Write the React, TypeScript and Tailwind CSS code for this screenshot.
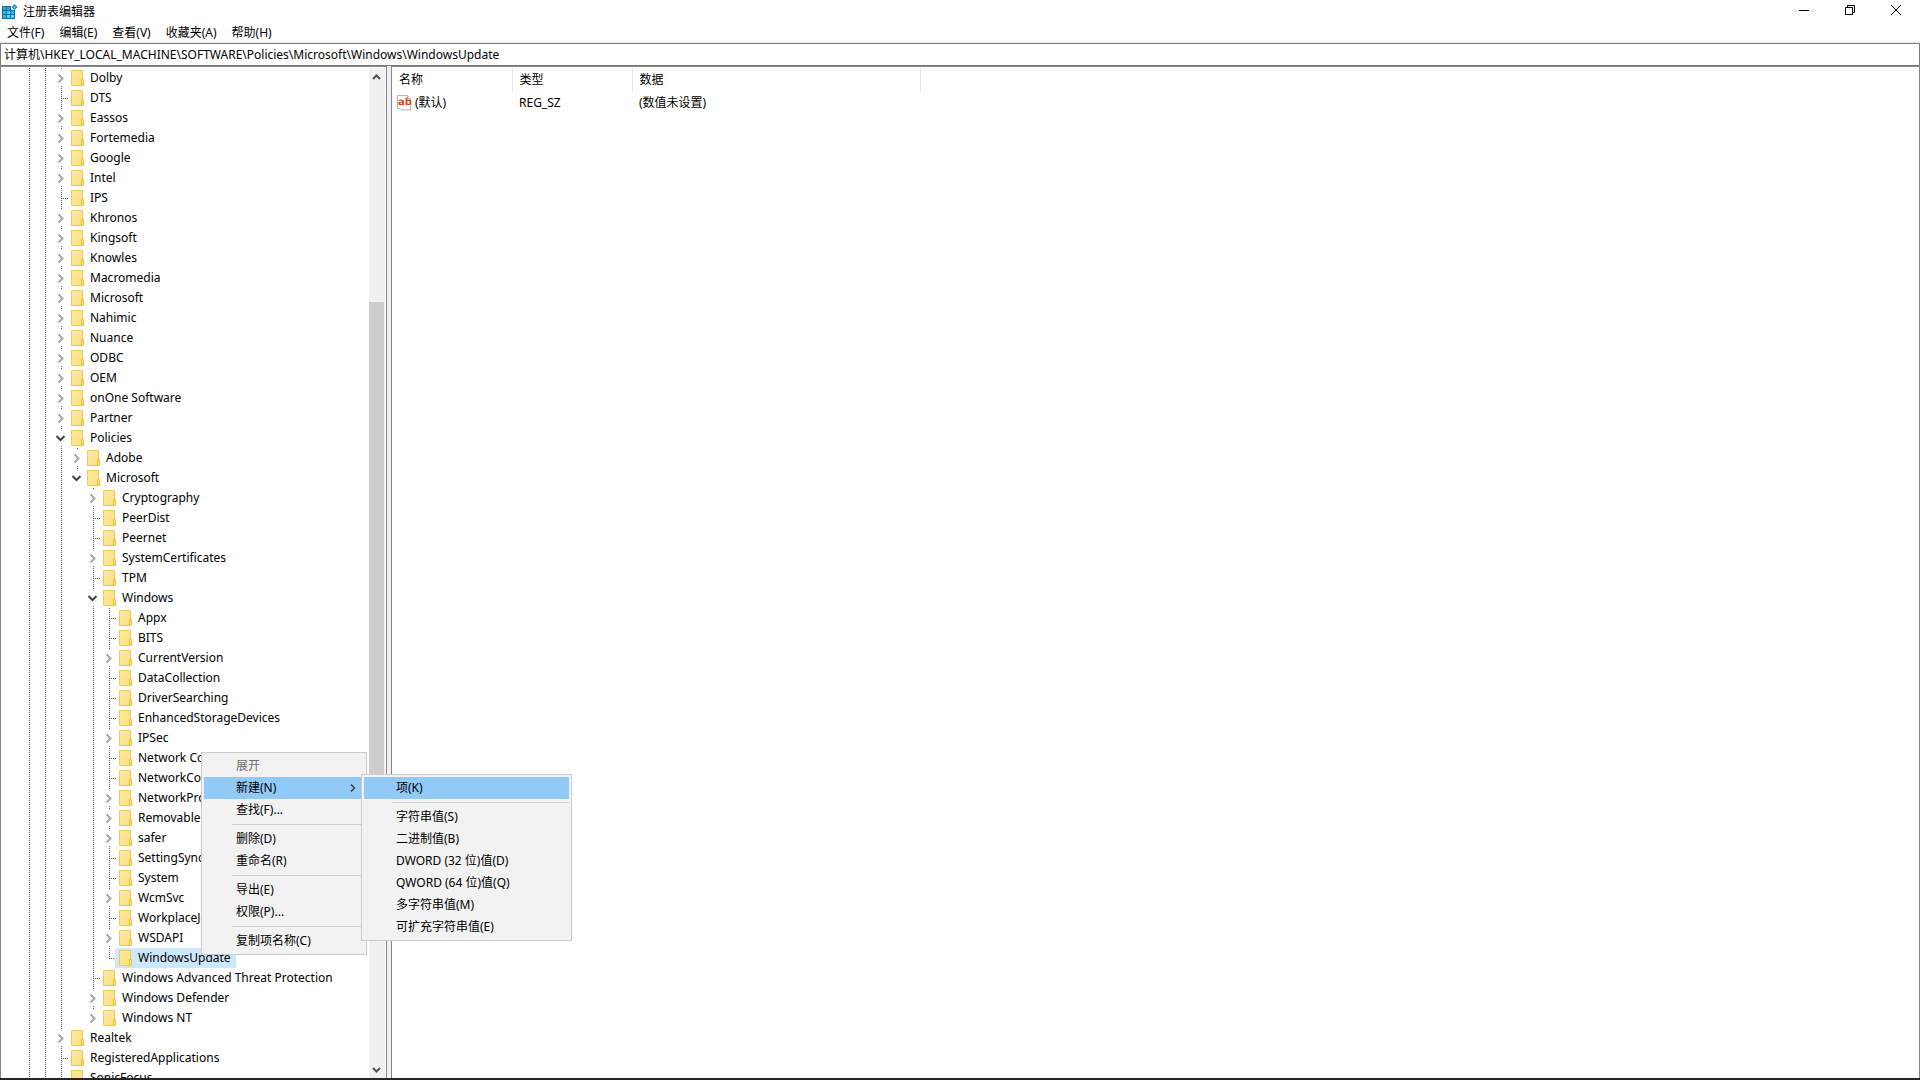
import React from 'react';

type TreeNode = {
  name: string;
  expandable?: boolean;
  selected?: boolean;
  children?: TreeNode[];
};

const leaf = (name: string): TreeNode => ({ name });
const closed = (name: string): TreeNode => ({ name, expandable: true });

const tree: TreeNode[] = [
  closed('Dolby'),
  leaf('DTS'),
  closed('Eassos'),
  closed('Fortemedia'),
  closed('Google'),
  closed('Intel'),
  leaf('IPS'),
  closed('Khronos'),
  closed('Kingsoft'),
  closed('Knowles'),
  closed('Macromedia'),
  closed('Microsoft'),
  closed('Nahimic'),
  closed('Nuance'),
  closed('ODBC'),
  closed('OEM'),
  closed('onOne Software'),
  closed('Partner'),
  {
    name: 'Policies',
    children: [
      closed('Adobe'),
      {
        name: 'Microsoft',
        children: [
          closed('Cryptography'),
          leaf('PeerDist'),
          leaf('Peernet'),
          closed('SystemCertificates'),
          leaf('TPM'),
          {
            name: 'Windows',
            children: [
              leaf('Appx'),
              leaf('BITS'),
              closed('CurrentVersion'),
              leaf('DataCollection'),
              leaf('DriverSearching'),
              leaf('EnhancedStorageDevices'),
              closed('IPSec'),
              leaf('Network Connections'),
              leaf('NetworkConnectivityStatusIndicator'),
              closed('NetworkProvider'),
              closed('RemovableStorage'),
              closed('safer'),
              leaf('SettingSync'),
              leaf('System'),
              closed('WcmSvc'),
              leaf('WorkplaceJoin'),
              closed('WSDAPI'),
              { name: 'WindowsUpdate', selected: true },
            ],
          },
          leaf('Windows Advanced Threat Protection'),
          closed('Windows Defender'),
          closed('Windows NT'),
        ],
      },
    ],
  },
  closed('Realtek'),
  leaf('RegisteredApplications'),
  leaf('SonicFocus'),
  leaf('SoundResearch'),
];

const menuBar = ['文件(F)', '编辑(E)', '查看(V)', '收藏夹(A)', '帮助(H)'];

// null is a separator
const newItems = [
  '项(K)',
  null,
  '字符串值(S)',
  '二进制值(B)',
  'DWORD (32 位)值(D)',
  'QWORD (64 位)值(Q)',
  '多字符串值(M)',
  '可扩充字符串值(E)',
];

const contextItems = [
  '展开',
  '新建(N)',
  '查找(F)...',
  null,
  '删除(D)',
  '重命名(R)',
  null,
  '导出(E)',
  '权限(P)...',
  null,
  '复制项名称(C)',
];

const FolderIcon = () => (
  <svg width="13" height="16" viewBox="0 0 13 16" className="shrink-0" aria-hidden="true">
    <defs>
      <linearGradient id="folder" x1="0" y1="0" x2="1" y2="1">
        <stop offset="0" stopColor="#ffe9a2" />
        <stop offset="1" stopColor="#ffdf7c" />
      </linearGradient>
    </defs>
    <path d="M.5 .5h11v15H.5z" fill="url(#folder)" stroke="#eecb52" />
    <path d="M10.500 9.500h2v6h-2z" fill="#ffe694" stroke="#e8c13c" />
  </svg>
);

const RegeditIcon = () => (
  <svg width="16" height="16" viewBox="0 0 16 16" aria-hidden="true">
    <path d="M0 2h9v4h4v9H0z" fill="#0673a8" />
    <path d="M1 3h3v3H1zM5 3h3v3H5z" fill="#2ba8dc" />
    <path d="M1 7h3v3H1zM9 7h3v3H9zM1 11h3v3H1z" fill="#35b6ea" />
    <path d="M5 7h3v3H5zM5 11h3v3H5zM9 11h3v3H9z" fill="#5fd0fa" />
    <path d="M12.500 0L15.500 3l-3 3-3-3z" fill="#0f7fb8" />
    <path d="M12.500 1.500L14 3l-1.500 1.500L11 3z" fill="#58cdf5" />
  </svg>
);

const StringValueIcon = () => (
  <svg width="15" height="16" viewBox="0 0 15 16" className="shrink-0" aria-hidden="true">
    <path d="M.5 .5h10l3 3v12l-2.500-1-2 1-2-1-2 1-2-2-2.500 0z" fill="#fff" stroke="#b4b4b4" />
    <path d="M10.500 .5v3h3" fill="none" stroke="#b4b4b4" />
    <text x="1" y="10" fontSize="10" fontWeight="700" fill="#d9441f" fontFamily="DejaVu Sans, sans-serif" textRendering="geometricPrecision">
      ab
    </text>
  </svg>
);

const Guide = ({ visible }: { visible: boolean }) => (
  <svg width="16" height="20" viewBox="0 0 16 20" className="shrink-0" aria-hidden="true">
    {visible && <path d="M8.500 0v20" stroke="#5c5c5c" strokeDasharray="1 1" />}
  </svg>
);

const Branch = ({ node, last }: { node: TreeNode; last: boolean }) => {
  if (node.children || node.expandable) {
    return (
      <button type="button" aria-label={node.name} className="shrink-0">
        <svg width="14" height="20" viewBox="0 0 14 20">
          <path d={last ? 'M8.500 0v2' : 'M8.500 0v2M8.500 18v2'} stroke="#5c5c5c" strokeDasharray="1 1" />
          {node.children ? (
            <path d="M3.500 8l4 4 4-4" fill="none" stroke="#404040" strokeWidth="2" />
          ) : (
            <path d="M5.500 6.500l4 4-4 4" fill="none" stroke="#a6a6a6" strokeWidth="2" />
          )}
        </svg>
      </button>
    );
  }
  return (
    <svg width="14" height="20" viewBox="0 0 14 20" className="shrink-0 overflow-visible" aria-hidden="true">
      <path d={last ? 'M8.500 0v11' : 'M8.500 0v20'} stroke="#5c5c5c" strokeDasharray="1 1" />
      <path d="M8 10.500h7" stroke="#5c5c5c" strokeDasharray="1 1" />
    </svg>
  );
};

const TreeItem = ({ node, last, guides }: { node: TreeNode; last: boolean; guides: boolean[] }) => (
  <li role="treeitem" aria-selected={!!node.selected}>
    <div className="flex h-5 items-center">
      {guides.map((visible, i) => (
        <Guide key={i} visible={visible} />
      ))}
      <Branch node={node} last={last} />
      <span
        className={`flex h-5 items-center gap-1.5 whitespace-nowrap pl-1 pr-[5px] ${
          node.selected ? 'bg-[#cce8ff]' : ''
        }`}
      >
        <FolderIcon />
        {node.name}
      </span>
    </div>
    {node.children && <TreeList nodes={node.children} guides={[...guides, !last]} />}
  </li>
);

const TreeList = ({ nodes, guides }: { nodes: TreeNode[]; guides: boolean[] }) => (
  <ul role="group">
    {nodes.map((node, i) => (
      <TreeItem key={node.name} node={node} last={i === nodes.length - 1} guides={guides} />
    ))}
  </ul>
);

const ScrollBar = () => (
  <div className="mr-px flex w-4 shrink-0 flex-col bg-[#f0f0f0]">
    <button type="button" aria-label="向上滚动" className="flex h-[17px] items-center justify-center">
      <svg width="10" height="8" viewBox="0 0 10 8">
        <path d="M1 6l3.500-3.500L8 6" fill="none" stroke="#505050" strokeWidth="2" />
      </svg>
    </button>
    <div className="basis-[21.5%]" />
    <div className="mr-px basis-[57%] bg-[#cdcdcd]" />
    <div className="flex-1" />
    <button type="button" aria-label="向下滚动" className="flex h-[17px] items-center justify-center">
      <svg width="10" height="8" viewBox="0 0 10 8">
        <path d="M1 2l3.500 3.500L8 2" fill="none" stroke="#505050" strokeWidth="2" />
      </svg>
    </button>
  </div>
);

const Separator = () => (
  <div role="separator" className="ml-7 py-[3px]">
    <div className="h-px bg-[#d0d0d0]" />
  </div>
);

const MenuItem = ({
  label,
  active,
  disabled,
  submenu,
}: {
  label: string;
  active?: boolean;
  disabled?: boolean;
  submenu?: boolean;
}) => (
  <button
    type="button"
    role="menuitem"
    disabled={disabled}
    className={`flex h-[22px] w-full items-center justify-between whitespace-nowrap pl-8 pr-2 ${
      active ? 'bg-[#91c9f7]' : ''
    } ${disabled ? 'text-[#6d6d6d]' : ''}`}
  >
    {label}
    {submenu && (
      <svg width="6" height="8" viewBox="0 0 6 8" aria-hidden="true">
        <path d="M1 .5L4.500 4 1 7.500" fill="none" stroke="#303030" strokeWidth="1.200" />
      </svg>
    )}
  </button>
);

const ContextMenu = () => (
  <div role="menu" className="absolute left-[201px] top-[752px] w-[166px] border border-[#ccc] bg-[#f2f2f2] p-0.5">
    {contextItems.map((label, i) => {
      if (!label) return <Separator key={i} />;
      if (label !== '新建(N)') return <MenuItem key={i} label={label} disabled={label === '展开'} />;
      return (
        <div key={i} className="relative">
          <MenuItem label={label} active submenu />
          <div
            role="menu"
            className="absolute -top-[3px] left-[157px] w-[211px] border border-[#ccc] bg-[#f2f2f2] p-0.5"
          >
            {newItems.map((item, j) =>
              item ? <MenuItem key={j} label={item} active={j === 0} /> : <Separator key={j} />
            )}
          </div>
        </div>
      );
    })}
  </div>
);

const TitleBar = () => (
  <header className="flex h-6 shrink-0 items-start justify-between pr-px">
    <div className="flex gap-[5px] pl-0.5 pt-1">
      <RegeditIcon />
      <h1>注册表编辑器</h1>
    </div>
    <div className="flex">
      <button type="button" aria-label="最小化" className="flex h-5 w-[46px] items-center justify-center">
        <svg width="10" height="10" viewBox="0 0 10 10">
          <path d="M0 5.500h10" stroke="#000" />
        </svg>
      </button>
      <button type="button" aria-label="还原" className="flex h-5 w-[46px] items-center justify-center">
        <svg width="10" height="10" viewBox="0 0 10 10" fill="none" stroke="#000">
          <path d="M.5 2.500h7v7h-7zM2.500 2.500v-2h7v7h-2" />
        </svg>
      </button>
      <button type="button" aria-label="关闭" className="flex h-5 w-[46px] items-center justify-center">
        <svg width="10" height="10" viewBox="0 0 10 10">
          <path d="M0 0l10 10M10 0L0 10" stroke="#000" />
        </svg>
      </button>
    </div>
  </header>
);

const ValueTable = () => (
  <table className="w-[529px] table-fixed border-collapse text-left">
    <thead>
      <tr className="h-6">
        <th className="w-[120px] border-r border-[#e5e5e5] pl-[7px] font-normal">名称</th>
        <th className="w-[120px] border-r border-[#e5e5e5] pl-[7px] font-normal">类型</th>
        <th className="border-r border-[#e5e5e5] pl-[7px] font-normal">数据</th>
      </tr>
    </thead>
    <tbody>
      <tr className="h-[21px]">
        <td className="pl-[5px]">
          <span className="flex items-center gap-[3px]">
            <StringValueIcon />
            (默认)
          </span>
        </td>
        <td className="pl-[7px]">REG_SZ</td>
        <td className="pl-[7px]">(数值未设置)</td>
      </tr>
    </tbody>
  </table>
);

export default function App() {
  return (
    <div className="relative flex h-screen flex-col overflow-hidden bg-white font-['Noto_Sans','Noto_Sans_CJK_SC',sans-serif] text-xs leading-4 text-black">
      <TitleBar />
      <nav className="flex h-[17px] shrink-0 items-center gap-px">
        {menuBar.map((label) => (
          <button key={label} type="button" className="px-[7px]">
            {label}
          </button>
        ))}
      </nav>
      <div className="shrink-0 bg-[#f0f0f0] pt-0.5">
        <input
          aria-label="地址"
          className="block h-[23px] w-full border border-[#7a7a7a] bg-white px-[3px] pb-0.5 outline-none"
          defaultValue="计算机\HKEY_LOCAL_MACHINE\SOFTWARE\Policies\Microsoft\Windows\WindowsUpdate"
        />
      </div>
      <main className="flex min-h-0 flex-1 bg-[#f0f0f0]">
        <section className="flex w-[387px] shrink-0 border border-b-0 border-[#828790] bg-white pt-px">
          <div role="tree" className="min-w-0 flex-1 overflow-hidden pl-5">
            <TreeList nodes={tree} guides={[true, true]} />
          </div>
          <ScrollBar />
        </section>
        <section className="ml-1 min-w-0 flex-1 border border-b-0 border-[#828790] bg-white pt-px">
          <ValueTable />
        </section>
      </main>
      <div className="h-0.5 shrink-0 bg-[#252525]" />
      <ContextMenu />
    </div>
  );
}
